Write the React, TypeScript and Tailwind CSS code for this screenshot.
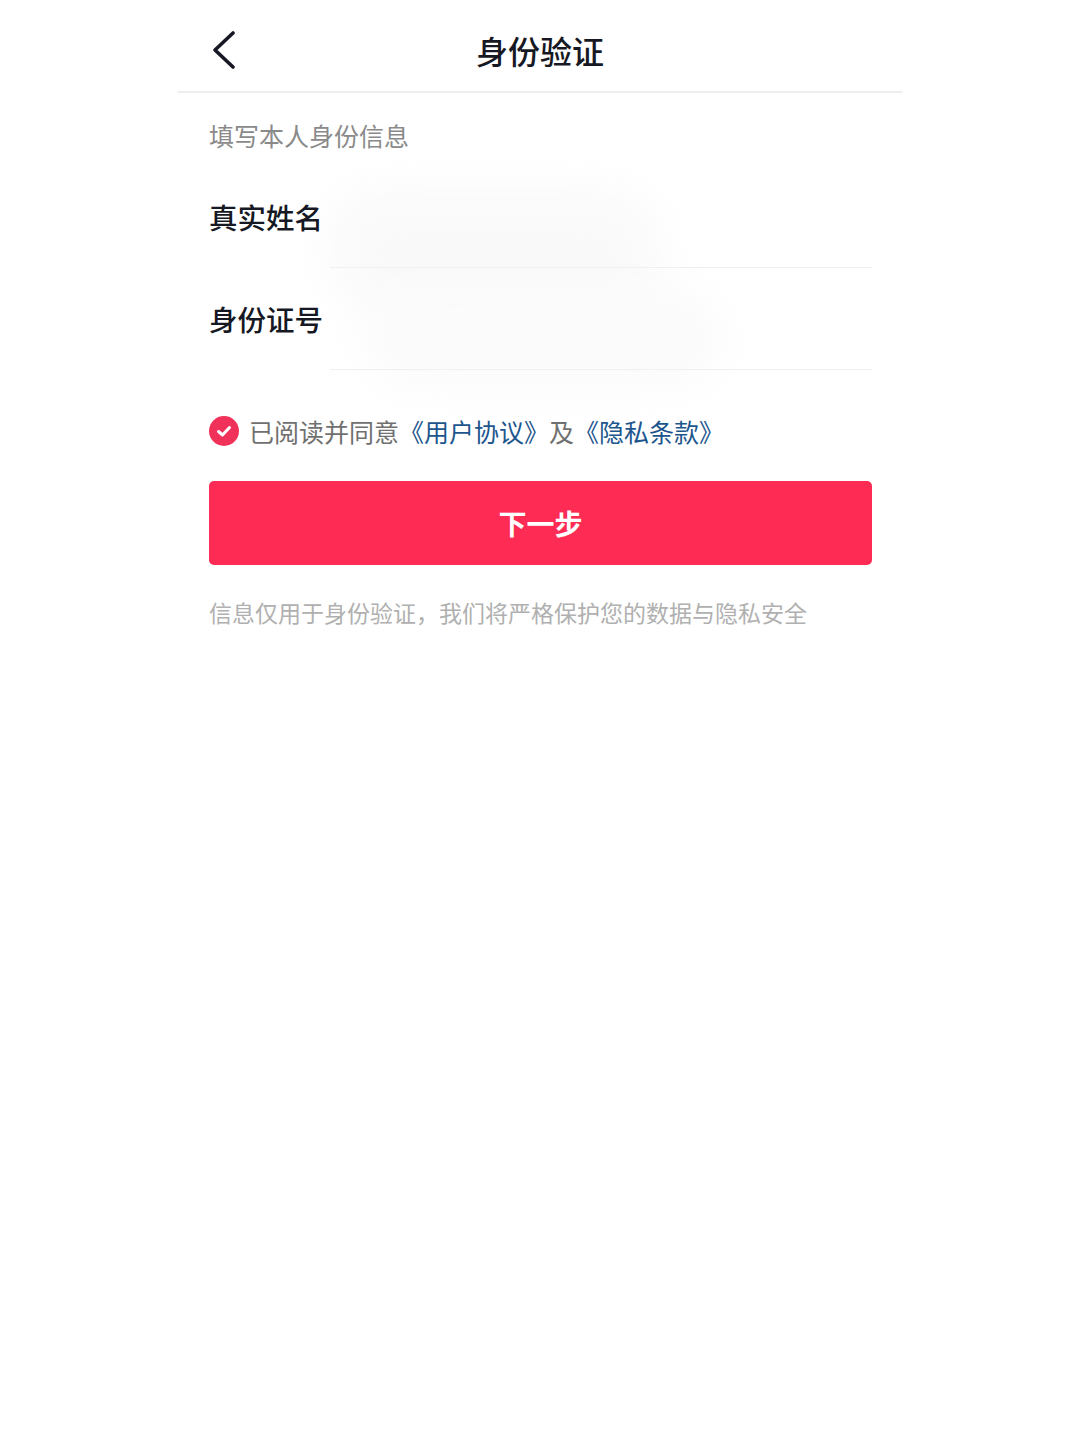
import React from "react";

const font = { fontFamily: '"Noto Sans CJK SC", "Noto Sans", sans-serif' };

function Row({ label }: { label: string }) {
  return (
    <div className="flex h-[102px] items-center">
      <div className="w-[121px] shrink-0 text-[28.5px] font-medium leading-none text-[#161823]">{label}</div>
      <div className="h-full flex-1 border-b border-[#f0f0f0]"></div>
    </div>
  );
}

export default function App() {
  return (
    <div className="min-h-[1439px] w-full bg-white" style={font}>
      <div className="mx-auto w-[724px]">
        <div className="grid h-[93px] grid-cols-[1fr_auto_1fr] items-center border-b-2 border-[#eeeeee] pt-[8px]">
          <div className="pl-[32px]">
            <svg width="26" height="38" viewBox="0 0 26 38" fill="none">
              <polyline points="23,2 5,19 23,36" stroke="#161823" strokeWidth="3.6" strokeLinecap="round" strokeLinejoin="round" />
            </svg>
          </div>
          <div className="text-[32px] font-medium leading-none text-[#161823]">身份验证</div>
          <div></div>
        </div>

        <div className="relative pl-[31px] pr-[30px]">
          <div className="pointer-events-none absolute left-[150px] top-[100px] h-[110px] w-[330px] rounded-full bg-[#f9f9f9] blur-xl"></div>
          <div className="pointer-events-none absolute left-[190px] top-[200px] h-[90px] w-[350px] rounded-full bg-[#fafafa] blur-xl"></div>

          <div className="relative pt-[28px] text-[25px] leading-[28px] text-[#8a8a8a]">填写本人身份信息</div>
          <div className="relative mt-[17px]">
            <Row label="真实姓名" />
            <Row label="身份证号" />
          </div>

          <div className="relative mt-[46px] flex items-center">
            <div className="flex h-[30px] w-[30px] items-center justify-center rounded-full bg-[#f0325a]">
              <svg width="18" height="18" viewBox="0 0 18 18" fill="none">
                <polyline points="3.5,9.5 7.5,13 14.5,5.5" stroke="#ffffff" strokeWidth="3" strokeLinecap="round" strokeLinejoin="round" />
              </svg>
            </div>
            <div className="ml-[10px] text-[25px] leading-none text-[#707070]">
              已阅读并同意<span className="text-[#1d568d]">《用户协议》</span>及<span className="text-[#1d568d]">《隐私条款》</span>
            </div>
          </div>

          <button className="relative mt-[35px] flex h-[84px] w-full items-center justify-center rounded-[5px] bg-[#fe2c55] text-[28px] font-bold text-white">
            下一步
          </button>

          <div className="relative mt-[32px] text-[23px] leading-[30px] text-[#b0b0b0]">
            信息仅用于身份验证，我们将严格保护您的数据与隐私安全
          </div>
        </div>
      </div>
    </div>
  );
}
